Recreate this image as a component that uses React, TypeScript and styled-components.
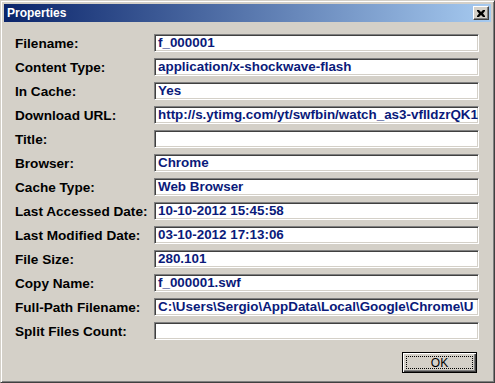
import React from "react";
import styled, { createGlobalStyle } from "styled-components";

const Global = createGlobalStyle`
  html, body { margin: 0; padding: 0; background: #d4d0c8; }
  body { font-family: "Liberation Sans", Arial, sans-serif; }
`;

const Window = styled.div`
  box-sizing: border-box;
  width: 495px;
  height: 383px;
  background: #d4d0c8;
  border-top: 1px solid #d4d0c8;
  border-left: 1px solid #d4d0c8;
  border-right: 1px solid #404040;
  border-bottom: 1px solid #404040;
  box-shadow: inset 1px 1px 0 #ffffff, inset -1px -1px 0 #808080;
  padding: 3px;
  display: flex;
  flex-direction: column;
`;

const TitleBar = styled.div`
  height: 18px;
  background: linear-gradient(to right, #0a246a, #a6caf0);
  display: flex;
  align-items: center;
  justify-content: space-between;
  padding: 0 2px 0 3px;
`;

const Title = styled.span`
  color: #ffffff;
  font-weight: bold;
  font-size: 12px;
`;

const CloseButton = styled.div`
  box-sizing: border-box;
  width: 16px;
  height: 14px;
  background: #d4d0c8;
  border-top: 1px solid #ffffff;
  border-left: 1px solid #ffffff;
  border-right: 1px solid #404040;
  border-bottom: 1px solid #404040;
  box-shadow: inset -1px -1px 0 #808080;
  display: flex;
  align-items: center;
  justify-content: center;
`;

const Body = styled.div`
  padding: 12px 11px 0 11px;
  display: flex;
  flex-direction: column;
`;

const Form = styled.div`
  display: grid;
  grid-template-columns: 139px 325px;
  row-gap: 6px;
  align-items: center;
`;

const Label = styled.div`
  font-weight: bold;
  font-size: 13.6px;
  color: #000000;
  white-space: nowrap;
`;

const Field = styled.div`
  box-sizing: border-box;
  height: 18px;
  background: #ffffff;
  border-top: 1px solid #808080;
  border-left: 1px solid #808080;
  border-right: 1px solid #ffffff;
  border-bottom: 1px solid #ffffff;
  box-shadow: inset 1px 1px 0 #404040, inset -1px -1px 0 #d4d0c8;
  padding: 0 2px 0 3px;
  font-weight: bold;
  font-size: 13.4px;
  line-height: 16px;
  color: #0a1a7a;
  white-space: nowrap;
  overflow: hidden;
`;

const Footer = styled.div`
  display: flex;
  justify-content: flex-end;
  padding: 12px 3px 0 0;
`;

const Button = styled.div`
  box-sizing: border-box;
  width: 75px;
  height: 21px;
  background: #d4d0c8;
  border: 1px solid #000000;
  box-shadow: inset 1px 1px 0 #ffffff, inset -1px -1px 0 #404040, inset -2px -2px 0 #808080;
  padding: 3px;
  display: flex;
`;

const Focus = styled.div`
  flex: 1;
  border: 1px dotted #000000;
  display: flex;
  align-items: center;
  justify-content: center;
  font-size: 12px;
  color: #000000;
`;

const rows: [string, string][] = [
  ["Filename:", "f_000001"],
  ["Content Type:", "application/x-shockwave-flash"],
  ["In Cache:", "Yes"],
  ["Download URL:", "http://s.ytimg.com/yt/swfbin/watch_as3-vflldzrQK1"],
  ["Title:", ""],
  ["Browser:", "Chrome"],
  ["Cache Type:", "Web Browser"],
  ["Last Accessed Date:", "10-10-2012 15:45:58"],
  ["Last Modified Date:", "03-10-2012 17:13:06"],
  ["File Size:", "280.101"],
  ["Copy Name:", "f_000001.swf"],
  ["Full-Path Filename:", "C:\\Users\\Sergio\\AppData\\Local\\Google\\Chrome\\U"],
  ["Split Files Count:", ""],
];

export default function App() {
  return (
    <>
      <Global />
      <Window>
        <TitleBar>
          <Title>Properties</Title>
          <CloseButton>
            <svg width="8" height="7" viewBox="0 0 8 7">
              <path d="M0 0h2l2 2 2-2h2v1l-2 2.5 2 2.5v1h-2l-2-2-2 2h-2v-1l2-2.5-2-2.5z" fill="#000" />
            </svg>
          </CloseButton>
        </TitleBar>
        <Body>
          <Form>
            {rows.map(([l, v]) => (
              <React.Fragment key={l}>
                <Label>{l}</Label>
                <Field>{v}</Field>
              </React.Fragment>
            ))}
          </Form>
          <Footer>
            <Button>
              <Focus>OK</Focus>
            </Button>
          </Footer>
        </Body>
      </Window>
    </>
  );
}
